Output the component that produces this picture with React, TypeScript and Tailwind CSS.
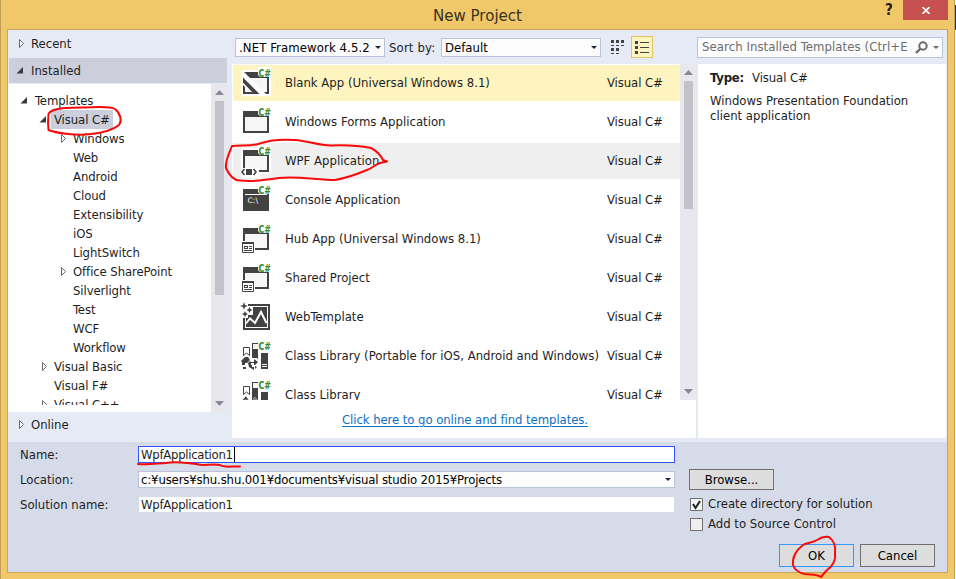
import type { ReactNode } from "react";

interface TreeItem {
  label: string;
  level: number;
  state?: "open" | "closed";
  selected?: boolean;
}

type IconKind = "blank" | "form" | "wpf" | "console" | "page" | "web" | "portable" | "library";

interface Template {
  name: string;
  icon: IconKind;
  row?: string;
}

const treeItems: TreeItem[] = [
  { label: "Templates", level: 0, state: "open" },
  { label: "Visual C#", level: 1, state: "open", selected: true },
  { label: "Windows", level: 2, state: "closed" },
  { label: "Web", level: 2 },
  { label: "Android", level: 2 },
  { label: "Cloud", level: 2 },
  { label: "Extensibility", level: 2 },
  { label: "iOS", level: 2 },
  { label: "LightSwitch", level: 2 },
  { label: "Office SharePoint", level: 2, state: "closed" },
  { label: "Silverlight", level: 2 },
  { label: "Test", level: 2 },
  { label: "WCF", level: 2 },
  { label: "Workflow", level: 2 },
  { label: "Visual Basic", level: 1, state: "closed" },
  { label: "Visual F#", level: 1 },
  { label: "Visual C++", level: 1, state: "closed" },
];

const templates: Template[] = [
  { name: "Blank App (Universal Windows 8.1)", icon: "blank", row: "bg-[#fdf4bf]" },
  { name: "Windows Forms Application", icon: "form" },
  { name: "WPF Application", icon: "wpf", row: "bg-[#efefef]" },
  { name: "Console Application", icon: "console" },
  { name: "Hub App (Universal Windows 8.1)", icon: "page" },
  { name: "Shared Project", icon: "page" },
  { name: "WebTemplate", icon: "web" },
  { name: "Class Library (Portable for iOS, Android and Windows)", icon: "portable" },
  { name: "Class Library", icon: "library" },
];

const levelPadding = ["pl-[12px]", "pl-[31px]", "pl-[50px]"];

function Expander({ state }: { state?: "open" | "closed" }) {
  return (
    <svg className="h-[11px] w-[9px] shrink-0" viewBox="0 0 9 11">
      {state === "open" && <path d="M7 2v6.5H0.5z" fill="#3a3a3a" />}
      {state === "closed" && (
        <path d="M2.5 1.5v8L6.5 5.5z" fill="#fff" stroke="#6b6b6b" />
      )}
    </svg>
  );
}

function CaretDown() {
  return (
    <svg className="h-[3px] w-[6px] shrink-0" viewBox="0 0 6 3">
      <path d="M0 0h6L3 3z" fill="#1b293e" />
    </svg>
  );
}

function ScrollBar({ thumb }: { thumb: string }) {
  return (
    <div className="flex w-[17px] shrink-0 flex-col items-center justify-between bg-[#e8e8ec] pt-[6px] pb-[6px]">
      <div className="flex flex-col items-center">
        <svg className="h-[5px] w-[9px]" viewBox="0 0 9 5">
          <path d="M0 5h9L4.5 0z" fill="#868999" />
        </svg>
        <div className={`mt-[6px] w-[9px] bg-[#c2c3c9] ${thumb}`} />
      </div>
      <svg className="h-[5px] w-[9px]" viewBox="0 0 9 5">
        <path d="M0 0h9L4.5 5z" fill="#868999" />
      </svg>
    </div>
  );
}

function WindowFrame() {
  return (
    <>
      <path d="M2 7h26v22H2z" fill="#424242" />
      <path d="M4 13h22v14H4z" fill="#f6f6f6" />
    </>
  );
}

function Books() {
  return (
    <>
      <path d="M2.5 9.5h6v8L5.5 15l-3 2.500z" fill="#fff" stroke="#424242" />
      <path d="M11 5h6v26h-6z" fill="#424242" />
      <path d="M12 6h6v5h-6z" fill="#f6f6f6" />
      <path d="M20 10h7v21h-7z" fill="#424242" />
      <path d="M20 10h7v5h-7zM21 26h5v1h-5zM21 28h5v1h-5z" fill="#f6f6f6" />
    </>
  );
}

function TemplateIcon({ kind }: { kind: IconKind }) {
  return (
    <svg className="h-[36px] w-[30px] shrink-0 overflow-visible" viewBox="0 0 30 36">
      {kind === "blank" && (
        <>
          <path d="M0 5h17v-3h13v29H0z" fill="#fff" />
          <WindowFrame />
          <path d="M2 7h1l22 22H14L2 21z" fill="#fff" />
          <path d="M2 12.500L18.500 29H13L2 17.500z" fill="#424242" />
          <path d="M2 20v9h9l-2-2H4v-5z" fill="#424242" />
        </>
      )}
      {kind === "form" && <WindowFrame />}
      {kind === "wpf" && (
        <>
          <path d="M0 5h17v-3h13v29H19v4H0z" fill="#fff" />
          <WindowFrame />
          <path d="M0 25h18v9H0z" fill="#fff" />
          <path d="M5 26h6v6H5z" fill="#424242" />
          <path d="M3.500 26L1 29l2.500 3M12.500 26l2.500 3-2.500 3" fill="none" stroke="#424242" strokeWidth="1.6" />
        </>
      )}
      {kind === "console" && (
        <>
          <path d="M2 7h26v22H2z" fill="#424242" />
          <path d="M4 12h22v1H4z" fill="#fff" />
          <text x="6.500" y="21" fontSize="7.5" textLength="10.500" lengthAdjust="spacingAndGlyphs" fill="#fff" fontFamily="DejaVu Sans">C:\</text>
        </>
      )}
      {kind === "page" && (
        <>
          <WindowFrame />
          <path d="M0 20h14v14H0z" fill="#fff" />
          <path d="M1.500 21.500h11v10h-11z" fill="#fff" stroke="#424242" />
          <path d="M1 21h12v2H1zM3 25h4v3H3zM8 25h3v1H8zM8 27h3v1H8zM3 29h8v1H3z" fill="#424242" />
          <path d="M4 26h2v1H4z" fill="#fff" />
        </>
      )}
      {kind === "web" && (
        <>
          <path d="M2 5h27v26H2z" fill="#424242" />
          <path d="M4 7h23v22H4z" fill="#fff" />
          <path d="M5 8h21v20H5z" fill="#424242" />
          <path d="M5 24.500l4-5 5 4.500 6-11 5.500 11" fill="none" stroke="#fff" strokeWidth="2" />
          <path d="M0 3h7v4h5v9H7v3H2V12H0z" fill="#fff" />
          <path d="M3 3l1 3 3 1-3 1-1 3-1-3-3-1 3-1zM8.500 8l1 2 2 1-2 1-1 2-1-2-2-1 2-1zM4 12l1 2 2 1-2 1-1 2-1-2-2-1 2-1z" fill="#424242" />
        </>
      )}
      {(kind === "portable" || kind === "library") && <Books />}
      {kind === "portable" && (
        <>
          <path d="M0 18h9v2h7l3 4-2 5v4H0z" fill="#fff" />
          <path d="M4 19h3l2 3-3 3H4v2H1v-3l-1-1zM7 25l2-2 1 1h3v-3l4 3-3 3h-3v2h2v3l-5-3zM2 29h3v2H2zM14 28l2 1-2 2z" fill="#424242" />
          <path d="M10 25h3v2h-3z" fill="#fff" />
        </>
      )}
      {kind === "library" && (
        <path d="M1 23l4-4 3 4zM12 22l2-2 2 3z" fill="#424242" stroke="#fff" strokeWidth="0.5" />
      )}
      {kind !== "web" && (
        <>
          <path d="M18 3h12v9H19l-2-2V5z" fill={kind === "blank" || kind === "wpf" ? "#fff" : "#fefefe"} />
          <text x="17.500" y="12" fontSize="10.500" fontWeight="700" textLength="12.500" lengthAdjust="spacingAndGlyphs" fill="#388a34" fontFamily="DejaVu Sans">C#</text>
        </>
      )}
    </svg>
  );
}

function Label({ children }: { children: ReactNode }) {
  return <span className="w-[118px] shrink-0">{children}</span>;
}

function Sidebar() {
  return (
    <aside className="flex w-[220px] shrink-0 flex-col">
      <div className="flex h-[28px] items-center gap-[5px] pb-px pl-[9px]">
        <Expander state="closed" />
        <span>Recent</span>
      </div>
      <div className="mr-px ml-px flex h-[25px] items-center gap-[5px] bg-[#cccedb] pl-[7px]">
        <Expander state="open" />
        <span className="pl-px">Installed</span>
      </div>
      <div className="mt-px flex h-[328px] bg-white">
        <ul className="mt-[7px] h-[314px] w-[203px] overflow-hidden">
          {treeItems.map((item) => (
            <li
              key={item.label}
              className={`flex h-[19px] items-center ${levelPadding[item.level]}`}
            >
              <span className={item.state === "closed" ? "pr-[2px] pl-px" : "pr-[3px]"}>
                <Expander state={item.state} />
              </span>
              <span className={`pr-[3px] pl-[3px] leading-[19px] tracking-[-0.1px] ${item.selected ? "bg-[#cccedb]" : ""}`}>
                {item.label}
              </span>
            </li>
          ))}
        </ul>
        <ScrollBar thumb="h-[194px]" />
      </div>
      <div className="flex h-[26px] items-center gap-[5px] pb-[2px] pl-[9px]">
        <Expander state="closed" />
        <span>Online</span>
      </div>
    </aside>
  );
}

function TemplateList() {
  return (
    <div className="flex h-[374px] flex-col bg-white">
      <div className="flex h-[336px]">
        <ul className="h-[336px] w-[448px] overflow-hidden pt-px pl-px">
          {templates.map((t) => (
            <li key={t.name} className={`mb-[3px] flex h-[36px] items-center pl-[8px] ${t.row ?? ""}`}>
              <TemplateIcon kind={t.icon} />
              <span className="w-[336px] shrink-0 pb-[2px] pl-[14px] whitespace-nowrap">{t.name}</span>
              <span className="pb-[2px] tracking-[-0.1px] whitespace-nowrap">Visual C#</span>
            </li>
          ))}
        </ul>
        <ScrollBar thumb="h-[128px]" />
      </div>
      <div className="flex h-[38px] items-center justify-center border-r border-[#e6eaf5] pt-px pl-[2px] text-[#0e70c0]">
        <a className="tracking-[-0.07px] underline underline-offset-2">Click here to go online and find templates.</a>
      </div>
    </div>
  );
}

function Toolbar() {
  return (
    <div className="flex h-[34px] items-center pl-[3px]">
      <div className="flex h-[19px] w-[150px] items-center justify-between border border-[#b9c3dc] bg-[#fcfcfc] pr-[3px] pl-[3px] text-black">
        <span className="w-[131px] overflow-hidden tracking-[0.1px] whitespace-nowrap">.NET Framework 4.5.2</span>
        <CaretDown />
      </div>
      <span className="w-[56px] pl-[4px] tracking-[0.15px] whitespace-nowrap">Sort by:</span>
      <div className="flex h-[19px] w-[160px] items-center justify-between border border-[#b9c3dc] bg-[#fcfcfc] pr-[3px] pl-[3px] text-black">
        <span>Default</span>
        <CaretDown />
      </div>
      <svg className="ml-[10px] h-[14px] w-[13px]" viewBox="0 0 13 14">
        <path d="M0 0h3v3H0zM5 0h3v3H5zM10 0h3v3h-3zM0 5h3v1H0zM5 5h3v1H5zM10 5h3v1h-3zM0 8h3v3H0zM5 8h3v3H5zM0 13h3v1H0zM5 13h3v1H5z" fill="#424242" />
      </svg>
      <div className="ml-[7px] flex h-[22px] w-[22px] items-center justify-center border border-[#e5c365] bg-[#fdf4bf]">
        <svg className="h-[13px] w-[14px]" viewBox="0 0 14 13">
          <path d="M0 0h3v3H0zM0 5h3v3H0zM0 10h3v3H0zM5 1h9v1H5zM5 6h9v1H5zM5 11h9v1H5z" fill="#424242" />
        </svg>
      </div>
    </div>
  );
}

function DetailsPane() {
  return (
    <section className="flex w-[249px] flex-col">
      <div className="flex h-[34px] items-center">
        <div className="flex h-[21px] w-[246px] items-center border border-[#b9c3dc] bg-[#fcfcfc] pr-[3px] pl-[4px] text-[#6d6d6d]">
          <span className="w-[207px] overflow-hidden pb-px tracking-[0.08px] whitespace-nowrap">Search Installed Templates (Ctrl+E</span>
          <svg className="ml-[6px] h-[13px] w-[13px] shrink-0" viewBox="0 0 13 13">
            <circle cx="8" cy="5" r="3.700" fill="none" stroke="#6b6b6b" strokeWidth="2" />
            <path d="M5.500 7.500L1 12" stroke="#6b6b6b" strokeWidth="2.400" />
          </svg>
          <svg className="ml-[5px] h-[3px] w-[6px] shrink-0" viewBox="0 0 6 3">
            <path d="M0 0h6L3 3z" fill="#6b6b6b" />
          </svg>
        </div>
      </div>
      <div className="ml-px h-[374px] bg-white px-[12px] pt-[6px]">
        <p className="leading-[15px]">
          <b className="mr-[8px] tracking-[-0.2px]">Type:</b>
          <span className="tracking-[-0.1px]">Visual C#</span>
        </p>
        <p className="mt-[8px] leading-[15px] whitespace-nowrap">
          Windows Presentation Foundation
          <br />
          client application
        </p>
      </div>
    </section>
  );
}

function ProjectForm() {
  return (
    <div className="flex h-[130px] bg-[#d6dbe9] pl-[12px]">
      <div className="flex w-[655px] shrink-0 flex-col pt-[4px]">
        <div className="flex h-[17px] items-center">
          <Label>Name:</Label>
          <div className="flex h-[17px] grow items-center border border-[#3355ff] bg-white pl-[2px]">
            <span className="border-r border-black pr-px leading-[15px] tracking-[-0.28px]">WpfApplication1</span>
          </div>
        </div>
        <div className="mt-[8px] flex h-[17px] items-center">
          <Label>Location:</Label>
          <div className="flex h-[17px] grow items-center justify-between border border-[#b9c3dc] bg-[#fcfcfc] pr-[3px] pl-[2px] text-black">
            <span className="tracking-[-0.14px]">c:¥users¥shu.shu.001¥documents¥visual studio 2015¥Projects</span>
            <CaretDown />
          </div>
        </div>
        <div className="mt-[8px] flex h-[17px] items-center">
          <Label>Solution name:</Label>
          <div className="mr-px ml-px flex h-[15px] grow items-center bg-white pl-[2px] tracking-[-0.28px]">WpfApplication1</div>
        </div>
      </div>
      <div className="flex w-[260px] shrink-0 flex-col pt-[27px] pl-[14px]">
        <button className="h-[21px] w-[85px] border border-[#707070] bg-[#dddddd] text-black">
          Browse...
        </button>
        <label className="mt-[4px] flex h-[20px] items-center gap-[5px] pl-px">
          <svg className="h-[13px] w-[13px]" viewBox="0 0 13 13">
            <path d="M.5.5h12v12H.5z" fill="#f4f4f4" stroke="#707070" />
            <path d="M3 6l2.500 4L10 3" fill="none" stroke="#1e1e1e" strokeWidth="2" />
          </svg>
          <span className="pb-[2px]">Create directory for solution</span>
        </label>
        <label className="flex h-[20px] items-center gap-[5px] pl-px">
          <svg className="h-[13px] w-[13px]" viewBox="0 0 13 13">
            <path d="M.5.5h12v12H.5z" fill="#efefef" stroke="#707070" />
          </svg>
          <span className="pb-[2px]">Add to Source Control</span>
        </label>
        <div className="mt-[10px] flex justify-end gap-[6px]">
          <button className="h-[23px] w-[75px] border border-[#3399ff] bg-[#dddddd] text-black">OK</button>
          <button className="h-[23px] w-[75px] border border-[#707070] bg-[#dddddd] text-black">Cancel</button>
        </div>
      </div>
    </div>
  );
}

// Red pen marks drawn over the dialog
function PenMarks() {
  return (
    <svg
      className="pointer-events-none absolute top-0 left-0 h-[579px] w-[956px]"
      viewBox="0 0 956 579"
      fill="none"
      stroke="#f90a0a"
      strokeWidth="2"
      strokeLinecap="round"
      strokeLinejoin="round"
    >
      <path d="M64 108C56 109 50 110 48.500 114C48 119 48 126 48.500 130C53 132 60 133 68 134C77 135 84 135 91 134C100 133 113 130 119 125C122 121 121 114 115 109C110 106 98 107 86 107.500C78 107 70 108 64 108" />
      <path d="M232 146C240 145 251 146 258 144C269 140 282 139 295 140C308 141 318 145 331 145.500C343 145 361 146 371 148C377 151 381 156 383 160L387 161.500L380 163C374 165 373 168 367 170C355 175 347 178 335 180C318 180 297 176 279 178C266 180 252 182 241 180.500C234 181 229 175 226 168C225 161 229 154 232 146z" />
      <path d="M138 464C151 465 159 463 166 463C177 461 190 463 202 465C208 465 215 464 220 465C224 468 232 466 240 466.500" />
      <path d="M803 545C796 550 792 558 793 565C795 571 800 573 805 574C811 575 817 574 821 577L826 571C833 566 836 559 835 553C836 546 833 540 829 537C824 536 820 538 817 540C812 543 806 543 803 545z" />
    </svg>
  );
}

export default function App() {
  return (
    <div className="relative flex h-[579px] w-[956px] overflow-hidden bg-white font-['DejaVu_Sans_Condensed','DejaVu_Sans',sans-serif] text-[13px] leading-[15px] text-[#1e1e1e]">
      <div className="flex h-[579px] w-[955px] flex-col border-r border-l border-[#c0a055] bg-[#f0c869]">
        <header className="flex h-[29px] shrink-0 pr-[6px]">
          <h1 className="grow pt-[6px] pl-[79px] text-center font-['DejaVu_Sans',sans-serif] text-[15px] leading-[20px] text-[#3b3222]">New Project</h1>
          <div className="w-[28px] pt-[2px] text-center text-[15px] leading-[17px] font-bold text-[#1e1e1e]">?</div>
          <div className="flex h-[20px] w-[45px] items-center justify-center bg-[#c75050]">
            <svg className="h-[7px] w-[8px]" viewBox="0 0 8 7">
              <path d="M.5 0l7 7M7.500 0l-7 7" stroke="#fff" strokeWidth="1.600" />
            </svg>
          </div>
        </header>
        <main className="ml-[6px] w-[941px] border border-[#c9a75a] bg-[#e6eaf5]">
          <div className="flex h-[412px]">
            <Sidebar />
            <section className="ml-[4px] w-[465px] shrink-0">
              <Toolbar />
              <TemplateList />
            </section>
            <DetailsPane />
          </div>
          <ProjectForm />
        </main>
      </div>
      <div className="mt-[5px] h-[25px] w-px bg-[#2b2b33]" />
      <PenMarks />
    </div>
  );
}
